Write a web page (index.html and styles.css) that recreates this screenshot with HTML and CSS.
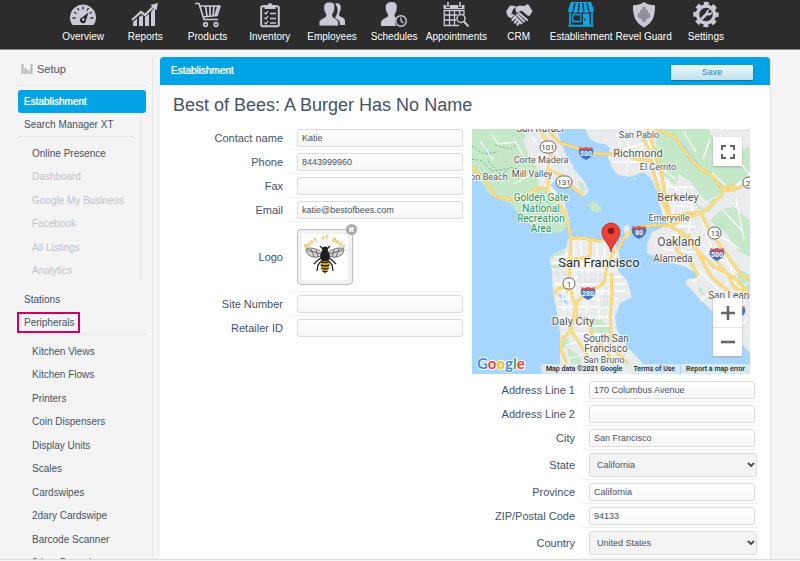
FILE: index.html
```html
<!DOCTYPE html>
<html lang="en">
<head>
<meta charset="utf-8">
<meta name="viewport" content="width=device-width, initial-scale=1">
<title>Establishment</title>
<link rel="stylesheet" href="styles.css">
</head>
<body>
<header class="topbar">
  <nav class="topnav" aria-label="Main">
    <a href="#"><svg viewBox="0 0 28 28"><path fill="currentColor" d="M3 24.5A13 13 0 1 1 25 24.5Q24.500 25 24 25H4Q3.500 25 3 24.500z"/><g stroke="#2b2b2b" stroke-width="1.300" fill="none"><path d="M3.500 18h3M5 12l2.500 1.500M8.500 8l1.500 2.500M14 6.500v3M19.500 8L18 10.500M24.500 18h-3M23 12l-2.500 1.500"/></g><path d="M19.500 12.500L17 20.500a3 3 0 1 1-4-3z" fill="#2b2b2b"/><circle cx="14.300" cy="19.500" r="1.200" fill="currentColor"/></svg>Overview</a>
    <a href="#"><svg viewBox="0 0 28 28"><path fill="currentColor" d="M2 22l4-3.500V26H2zM8 17l3-2 1 1v10H8zM14 17l4-3v12h-4zM20 12l4-5v19h-4z"/><path d="M1 20l9-8 4 3 9-9" fill="none" stroke="currentColor" stroke-width="2.200"/><path fill="currentColor" d="M27 3l-1.500 7.500L19.500 5z"/></svg>Reports</a>
    <a href="#"><svg viewBox="0 0 28 28"><g fill="none" stroke="currentColor" stroke-width="1.700" stroke-linejoin="round"><path d="M1 3.500h4l5 16h14M6 6h20l-3 9.500L9 17M11.500 6l1.500 10M16 6v10M20 6l-1 10M24 6l-3 10"/><circle cx="11.500" cy="24.500" r="1.800"/><circle cx="22" cy="24.500" r="1.800"/></g></svg>Products</a>
    <a href="#"><svg viewBox="0 0 28 28"><rect x="5.200" y="6.200" width="17.600" height="20" rx="1.500" fill="none" stroke="currentColor" stroke-width="2"/><path fill="currentColor" d="M8.500 9V5H12a2 2 0 1 1 4 0h3.500v4z"/><path d="M8.500 12.500l1.500 1.500 2-3M8.500 17.500l1.500 1.500 2-3M8.500 22.500l1.500 1.500 2-3M14 13.500h6M14 18.500h6M14 23h6" fill="none" stroke="currentColor" stroke-width="1.300"/></svg>Inventory</a>
    <a href="#"><svg viewBox="0 0 28 28"><path fill="currentColor" d="M17 3.500c5-1.500 6.500 2 5.500 6.500-.5 2-1.500 3-1.500 5 0 2 6 2 6 6v4h-5c0-4-1-5-5-6.500 0-2 2-3 2.500-7 .3-3-.5-6-2.500-8z"/><path fill="currentColor" d="M11.500 2c5 0 6 3.500 5 8-.5 2.500-2 3.500-2 5.500 0 3 6 2.500 6 8V26H1v-3c0-5 7-4.500 7-7.500 0-2-1.500-3-2-5.500-1-4.500.5-8 5.500-8z" stroke="#2c2c2c" stroke-width=".8"/></svg>Employees</a>
    <a href="#"><svg viewBox="0 0 28 28"><path fill="currentColor" d="M11.500 2c5 0 6 3.500 5 8-.5 2.500-2 3.500-2 5.500 0 1.500 1 2 2 2.500-2 2.500-2 5-.5 8H1v-3c0-5 7-4.500 7-7.500 0-2-1.500-3-2-5.500-1-4.500.5-8 5.500-8z"/><circle cx="21" cy="21" r="5.300" fill="none" stroke="currentColor" stroke-width="1.400"/><path d="M21 17.500V21l2.500 2" fill="none" stroke="currentColor" stroke-width="1.300"/></svg>Schedules</a>
    <a href="#"><svg viewBox="0 0 28 28"><path d="M1.500 5h21v4h-21z" fill="currentColor"/><path d="M6 2v6M18 2v6" stroke="#2b2b2b" stroke-width="3.400"/><path d="M6 2v5M18 2v5" stroke="currentColor" stroke-width="1.600"/><path d="M2.200 10v15.500H17M22 10v5M2 15h13M2 20h12M7.500 10v15M12.500 10v15M17.500 10v5M2 10.500h20" fill="none" stroke="currentColor" stroke-width="1.300"/><circle cx="19" cy="18.500" r="4" fill="#2b2b2b" stroke="currentColor" stroke-width="1.500"/><path d="M22 21.500l4.500 5" stroke="currentColor" stroke-width="2"/></svg>Appointments</a>
    <a href="#"><svg viewBox="0 0 28 28"><path fill="currentColor" d="M5 5.500L11 6l-3 3.500-1 3-2 5-2-1-2-5zM10 7.500l4-2 5 .5 4-2 4.500 7-3 5-2-.5-6-5-3 1.500c-2 1-3.500 0-2.500-1.500z"/><path d="M14 13l8 7M12 14.500l7 7M9.500 16l7 7.500" stroke="currentColor" stroke-width="2.100" stroke-linecap="round"/><path d="M6 17l1.500-2M7.500 20l2.500-3M10 22.500l2-3M12.500 24.500l1.500-2" stroke="currentColor" stroke-width="2.300" stroke-linecap="round"/></svg>CRM</a>
    <a href="#" class="is-active"><svg viewBox="0 0 28 28"><path fill="currentColor" d="M4 2h20l3 8c0 3-4.200 3.500-5 1-1 2.500-4.500 2.500-5.300 0-1 2.500-4.500 2.500-5.400 0-1 2.500-4.500 2.500-5.300 0C5 13.500 1 13 1 10z"/><path d="M8 3L6.200 11M12.200 3L11.300 11M15.800 3L16.700 11M20 3L21.800 11" stroke="#2b2b2b" stroke-width="1.400"/><path d="M3 13v12.500h22V13M1.500 26h25" fill="none" stroke="currentColor" stroke-width="1.700"/><path d="M5.800 14.500h8v7h-8z" fill="none" stroke="currentColor" stroke-width="1.300"/><path fill="currentColor" d="M16 13.500h6.500V25H16z"/><circle cx="17.800" cy="19.500" r=".9" fill="#2b2b2b"/></svg>Establishment</a>
    <a href="#"><svg viewBox="0 0 28 28"><path fill="currentColor" d="M14 2c3 2.500 7 3 11 3.300C25 15 24 22 14 27.500 4 22 3 15 3 5.300 7 5 11 4.500 14 2z"/><path d="M9 13v5M11 10v9M13 7v15M15 7v15M17 10v9M19 13v5" stroke="#6c6d73" stroke-width="1.200"/></svg>Revel Guard</a>
    <a href="#"><svg viewBox="0 0 28 28"><circle cx="14" cy="14.500" r="10.700" fill="none" stroke="currentColor" stroke-width="4" stroke-dasharray="4.800 3.600" stroke-dashoffset="2.400"/><circle cx="14" cy="14.500" r="8.500" fill="none" stroke="currentColor" stroke-width="3.500"/><path d="M10.300 18.300l5-5" stroke="currentColor" stroke-width="2.800" stroke-linecap="round"/><path d="M18.500 9.800l-2.200 1.200v2h2l1.700-1.800c.5 2.500-1 4.300-3.300 4.300-2.500-.3-3.500-3-2-4.800 1-1 2.200-1.500 3.800-.9z" fill="currentColor"/></svg>Settings</a>
  </nav>
</header>

<div class="workspace">
  <aside class="sidebar">
    <h2 class="setup"><svg viewBox="0 0 12 10"><path d="M1.500 0v10M4.500 4v6M7.500 6v4M10.500 0v10" stroke="#b5b5b5" stroke-width="2"/></svg>Setup</h2>
    <nav class="menu" aria-label="Setup">
      <a href="#" class="menu-item is-current">Establishment</a>
      <div class="scroll-group">
        <a href="#" class="menu-item">Search Manager XT</a>
        <ul class="submenu">
          <li><a href="#">Online Presence</a></li>
          <li class="muted"><a href="#">Dashboard</a></li>
          <li class="muted"><a href="#">Google My Business</a></li>
          <li class="muted"><a href="#">Facebook</a></li>
          <li class="muted"><a href="#">All Listings</a></li>
          <li class="muted"><a href="#">Analytics</a></li>
        </ul>
      </div>
      <a href="#" class="menu-item">Stations</a>
      <div class="menu-item"><a href="#" class="highlight">Peripherals</a></div>
      <ul class="submenu submenu-long">
        <li><a href="#">Kitchen Views</a></li>
        <li><a href="#">Kitchen Flows</a></li>
        <li><a href="#">Printers</a></li>
        <li><a href="#">Coin Dispensers</a></li>
        <li><a href="#">Display Units</a></li>
        <li><a href="#">Scales</a></li>
        <li><a href="#">Cardswipes</a></li>
        <li><a href="#">2dary Cardswipe</a></li>
        <li><a href="#">Barcode Scanner</a></li>
        <li><a href="#">2dary Barcode</a></li>
      </ul>
    </nav>
  </aside>

  <main class="panel">
    <div class="panel-head">
      <h1>Establishment</h1>
      <button type="submit" form="establishment" class="save">Save</button>
    </div>
    <form id="establishment" class="panel-body">
      <h2 class="title">Best of Bees: A Burger Has No Name</h2>
      <div class="columns">
        <div>
          <div class="row"><label for="contact">Contact name</label><div class="field"><input id="contact" type="text" value="Katie"></div></div>
          <div class="row"><label for="phone">Phone</label><div class="field"><input id="phone" type="text" value="8443999960"></div></div>
          <div class="row"><label for="fax">Fax</label><div class="field"><input id="fax" type="text"></div></div>
          <div class="row"><label for="email">Email</label><div class="field"><input id="email" type="text" value="katie@bestofbees.com"></div></div>
          <div class="row row-logo"><span class="row-label">Logo</span><div class="field">
            <div class="logo-box">
              <svg viewBox="0 0 46 46" role="img" aria-label="Best of Bees logo">
                <path id="arc" d="M4 15Q23 -4 42 15" fill="none"/>
                <text class="bee-text"><textPath href="#arc" startOffset="50%" text-anchor="middle">Best of Bees</textPath></text>
                <g fill="#d5d5d5" stroke="#444" stroke-width=".7"><path d="M21 19C15 14 7 13 4 15c0 4 3 7 7 8 4 1 8-1 10-2z"/><path d="M25 19c6-5 14-6 17-4 0 4-3 7-7 8-4 1-8-1-10-2z"/><path d="M5 16l14 4M9 15l3 8M14 16l2 7M41 16l-14 4M37 15l-3 8M32 16l-2 7"/></g>
                <path d="M21 15l-3-3M25 15l3-3M20 23l-5 4-3 3M20 26l-4 5-1 6M26 23l5 4 3 3M26 26l4 5 1 6" stroke="#222" stroke-width="1.300" fill="none"/>
                <path fill="#1d1d1d" d="M20.500 13.500q2.500-2 5 0l.5 4q2.500 2 1.500 7-1 3-4.500 3t-4.500-3q-1-5 1.500-7z"/>
                <path fill="#e9a620" d="M19 26q4 3 8 0 2 9-4 14-6-5-4-14z"/><path d="M19 27.500q4 2 8 0M18.800 31q4.200 2 8.400 0M19.200 34q3.800 2 7.600 0M20.500 37q2.500 1.500 5 0" stroke="#222" stroke-width="1.400" fill="none"/>
              </svg>
              <button type="button" class="remove" aria-label="Remove logo"><svg viewBox="0 0 11 11"><path d="M3.500 3.500l4 4M7.500 3.500l-4 4" stroke="#fff" stroke-width="1.800"/></svg></button>
            </div>
          </div></div>
          <div class="row"><label for="site">Site Number</label><div class="field"><input id="site" type="text"></div></div>
          <div class="row row-last"><label for="retailer">Retailer ID</label><div class="field"><input id="retailer" type="text"></div></div>
        </div>

        <div>
          <div class="map">
            <svg class="map-art" viewBox="0 0 278 245" role="img" aria-label="Map of San Francisco Bay">
              <rect width="278" height="245" fill="#a6d6fd"/>
              <!-- land -->
              <g fill="#e9ebed">
                <path d="M0 0H83l3 4 4 12 5 12 6 11 12 14 4 10-7 5-12-14-10-5-10 7 3 7 12 11 5 20-8 8-12 2-17-8-8-5-13-17-12-5-10-5L8 51 0 43z"/>
                <path d="M113 0l5 10 7 4 8 1 5 4-2 10 4 10 6 7 12 2 14-5 8 8 6 16 1 9 5 11 4 9-16 7-5 12v9l13 6 17 7 13 4 10 4-2 4-10 1-3 4 12 13 13 13 10 7 13 13 10 17 7 7V0z"/>
                <path d="M77 129l7-5 10-5 2-9 2-3 15 4h18l10 3 5 6 2 11-3 10 10 10 5 17-12 6-5 14 2 13 10 17 10 10 7 8 6 9H88V204l-3-20-4-20-1-23z"/>
                <path d="M151 99l5-4 3 9-4 6z"/>
              </g>
              <!-- parks and hills -->
              <g fill="#c5e8c9">
                <path d="M0 0h48l12 12 3 14 8 12-3 14 10 8 10 18 9 17-8 8-12 2-17-8-8-5-13-17-12-5-10-5L8 51 0 43z"/>
                <path d="M116 76l5-4 5 3 4 5-4 4-6-2zM160 46l4 4-2 1zM105 52l6 2 3 6-4 3z"/>
                <path d="M185 0h52l7 16 18 8 16-6v26l-28 22-14 18-12-6-12-14-18-16-14-16 4-10z"/>
                <path d="M238 92l12-12 12-2 16 14v36l-12-6-12-18zM262 138l16 8v24l-8-12zM115 190l14 0 10 11 3 10-10-2-12-8zM77 129l7-5 9-4-1 4-14 7zM79 136h14v3H80zM95 219l12 7 4 16-12-6zM226 158l5 2 1 6-5-3zM90 208l6 2 3 7-8 2z"/>
              </g>
              <g fill="#e9ebed"><path d="M62 0h22l8 24 10 14-7 6-13-4-7 12 9 10 4 10-6 1-8-12-8-4 2-8-4-12-7-10-6-16z"/><path d="M206 44l12 8 12 16 10 8-6 6-14-12-14-10z"/></g>
              <path fill="#a6d6fd" d="M210 13l8 12 8 8-2 3-9-8-7-12zM86 165l6 1 4 9-6-2zM200 134l14 4 9 6-8 2-14-7zM181 61l6 1-1 4-6-1zM235 184l4 2-5 5-3-5zM14 21l6 4-1 2-6-3z"/>
              <g fill="none" stroke="#63b27c" stroke-width="1" stroke-dasharray="2 2"><path d="M0 30l10 2 10 10 14-2M23 16l16 4 9-7M16 32l13 14M0 17l12 8 14-2M64 75l10-4 8 10M30 46l8-8 14 4"/></g>
              <!-- local streets -->
              <g fill="none" stroke="#fff" stroke-width="1.300">
                <path d="M60 8l14 18M58 31l22 6M56 45l20 8M84 22l10 18M70 10l4 30M72 56l12 8M20 5l6 10 18-2 8 16M8 12l14 20M42 55l18-10M48 65l12 14"/>
                <path d="M145 5l7 28M150 20l24-6M140 33h34M157 3l-2 40M175 2l12 52M166 20l16-4M180 34l24 16M180 44l28 18M187 58h34M188 66l34 10M190 76l36 2M190 84l30 2M197 50l-6 40M205 52l-5 42M213 58l-7 46M222 70l-8 48M196 96l28 2M200 105l30 6M187 112l40 5M190 120l46 5M228 86l12 34M234 98l34 22M226 112l40 32M222 122l54 42M216 131l46 44M252 125l22 50M236 120l-8 14M248 132l-8 16M262 142l-12 20M275 153l-12 22M238 10l-7 20M248 6l30 40M242 36l30-24M236 72l40-22M250 80l20 22M264 70l8 40M212 3l12 20M240 44l22 20M230 144l-10 10M238 164l-10 8M256 180l-12 6M268 184v25M275 190l-12 14"/>
                <path d="M82 128h62M80 134h60M80 141h66M81 148h70M82 155h72M83 162h70M84 170h62M85 178h58M87 188h54M88 197h52M90 205h54M102 112l2 75M109 112l3 65M117 114l-2 70M125 114l2 77M133 114l-4 66M140 118l-4 72M88 128l4 54M95 123l3 60M104 205l26 38M114 203l28 40M128 208l26 34M145 208l-20 8M152 219l-22 8M158 226l-20 10M94 216l18-4M96 230l20-6"/>
              </g>
              <!-- built-up blocks -->
              <g fill="#dfe1e4" opacity=".6"><path d="M106 145h26v9h-26zM83 140h12v10H83zM128 166h14v12h-14zM190 108h18v8h-18zM240 184l22 22 2 10-14-18z"/></g>
              <!-- highways -->
              <g fill="none" stroke="#f2c95c" stroke-width="2.900" stroke-linejoin="round">
                <path id="h1" d="M67 0l6 9 8 9-5 20 0 24 9 10 8 11 4 16 2 10h12l10 2 10 1M77 41l14 6 9 11 11 8M76 60l-12-1-8 6-14 6-18-3L14 52 0 38"/>
                <path id="h2" d="M78 4l10 10 14 4 14 6 22 1 11-1 15 6 16 2M168 3l10 20 2 15 7 24 6 15 5 20 12 7 12 14 20 20 20 10 21 24M175 0l8 22 6 18 3 20 5 22 1 15M183 0l20 8 8 12 14 17 14 9 13 15 9 0 17-7M187 89l24-4 20-2 18-16 4-8 10-3M200 96l28-12 14 24 8 11 20 28 8 3M210 101l-6 20 14 10 8 16M216 105l18 34 8 12 16 12M238 124l18 22 6 12 16 7M145 121l8-14 8-6 12-4 12-1 13 1"/>
                <path id="h3" d="M99 109l-1 17-1 22-2 15M82 165l4-5 12-3 2 10 4 10-3 13-2 12-10 9v10l6 14-3 10M142 121l-8 20-2 13-14 9-13 9-1 14-6 14 8 12 8 12 10 20M107 187l10 8 4 14 14 12 8 22M139 144l1 23-2 18 1 15-1 17 15 14 10 14M118 112v16l-18 2"/>
              </g>
              <g fill="none" stroke="#fde08a" stroke-width="1.700" stroke-linejoin="round">
                <use href="#h1" stroke-width="1.700"/><use href="#h2"/><use href="#h3"/>
                <path d="M67 0l6 9 8 9-5 20 0 24 9 10 8 11 4 16 2 10h12l10 2 10 1"/>
              </g>
              <!-- route shields -->
              <g class="route">
                <rect x="68" y="12" width="16" height="12" rx="6"/><text x="76" y="21">101</text>
                <rect x="84" y="47" width="16" height="12" rx="6"/><text x="92" y="56">131</text>
                <rect x="236" y="98" width="13" height="12" rx="6"/><text x="243" y="107">13</text>
                <rect x="271" y="48" width="15" height="11" rx="5"/><text x="276" y="57">2</text>
                <rect x="91" y="149" width="12" height="11" rx="5"/><text x="97" y="158">1</text>
              </g>
              <g class="interstate">
                <g id="sh"><path d="M107 20q7 2 14 0 2 7-7 11-9-4-7-11z" fill="#4272c4"/><path d="M107.500 18l3 1 3.500-1 3.500 1 3-1v3h-13z" fill="#dd5148"/></g>
                <use href="#sh" x="53" y="79"/><use href="#sh" x="2" y="140"/><use href="#sh" x="131" y="101"/><use href="#sh" x="152" y="159"/>
                <text x="114" y="27">580</text><text x="167" y="106">80</text><text x="116" y="167">280</text><text x="245" y="128">580</text>
              </g>
              <!-- place names -->
              <g class="place">
                <text x="68" y="3" class="s10">San Rafael</text><text x="69" y="34">Corte Madera</text><text x="60" y="48">Mill Valley</text><text x="17" y="51">on Beach</text>
                <text x="167" y="9">San Pablo</text><text x="166" y="28" class="s11">Richmond</text><text x="186" y="41">El Cerrito</text><text x="206" y="72" class="s11">Berkeley</text><text x="197" y="92">Emeryville</text>
                <text x="207" y="117" class="s12">Oakland</text><text x="201" y="133" class="s10">Alameda</text><text x="264" y="170" class="s10">San Leandro</text>
                <text x="101" y="196" class="s11">Daly City</text><text x="134" y="213" class="s10">South San</text><text x="134" y="223" class="s10">Francisco</text><text x="132" y="234">San Bruno</text>
              </g>
              <g class="place park"><text x="69" y="72">Golden Gate</text><text x="69" y="83">National</text><text x="69" y="93">Recreation</text><text x="69" y="103">Area</text></g>
              <path d="M139 123c-1-8-9-12-9-20a9 9 0 0 1 18 0c0 8-8 12-9 20z" fill="#ea4335" stroke="#c5221f" stroke-width=".8"/><circle cx="139" cy="102" r="3.200" fill="#8c1914"/>
              <g class="place"><text x="127" y="138" class="city">San Francisco</text></g>
              <text x="5" y="240" class="brand"><tspan fill="#4285f4">G</tspan><tspan fill="#ea4335">o</tspan><tspan fill="#fbbc05">o</tspan><tspan fill="#4285f4">g</tspan><tspan fill="#34a853">l</tspan><tspan fill="#ea4335">e</tspan></text>
            </svg>
            <button type="button" class="map-btn fullscreen" aria-label="Toggle fullscreen"><svg viewBox="0 0 14 14"><path d="M1 5V1h4M9 1h4v4M13 9v4H9M5 13H1V9" fill="none" stroke="#666" stroke-width="2"/></svg></button>
            <div class="zoom">
              <button type="button" class="map-btn" aria-label="Zoom in"><svg viewBox="0 0 14 14"><path d="M7 0v14M0 7h14" stroke="#666" stroke-width="2.600"/></svg></button>
              <button type="button" class="map-btn" aria-label="Zoom out"><svg viewBox="0 0 14 14"><path d="M0 7h14" stroke="#666" stroke-width="2.600"/></svg></button>
            </div>
            <div class="credits"><span>Map data ©2021 Google</span><a href="#">Terms of Use</a><a href="#">Report a map error</a></div>
          </div>
          <div class="address">
            <div class="row"><label for="addr1">Address Line 1</label><div class="field"><input id="addr1" type="text" value="170 Columbus Avenue"></div></div>
            <div class="row"><label for="addr2">Address Line 2</label><div class="field"><input id="addr2" type="text"></div></div>
            <div class="row"><label for="city">City</label><div class="field"><input id="city" type="text" value="San Francisco"></div></div>
            <div class="row row-select"><label for="state">State</label><div class="field"><select id="state"><option>California</option></select><svg class="chevron" viewBox="0 0 8 6"><path d="M1 1l3 3 3-3" fill="none" stroke="#3f4a5a" stroke-width="1.800"/></svg></div></div>
            <div class="row"><label for="province">Province</label><div class="field"><input id="province" type="text" value="California"></div></div>
            <div class="row"><label for="zip">ZIP/Postal Code</label><div class="field"><input id="zip" type="text" value="94133"></div></div>
            <div class="row row-select"><label for="country">Country</label><div class="field"><select id="country"><option>United States</option></select><svg class="chevron" viewBox="0 0 8 6"><path d="M1 1l3 3 3-3" fill="none" stroke="#3f4a5a" stroke-width="1.800"/></svg></div></div>
          </div>
        </div>
      </div>
    </form>
  </main>
</div>
</body>
</html>
```
FILE: styles.css
```css
* { box-sizing: border-box; }

body {
  margin: 0;
  height: 100vh;
  display: flex;
  flex-direction: column;
  overflow: hidden;
  background: #f4f4f4;
  color: #465265;
  font: 10px/12px "Liberation Sans", Arial, sans-serif;
}

a { color: inherit; text-decoration: none; }
h1, h2, ul { margin: 0; padding: 0; font-weight: normal; }
li { list-style: none; }
svg { display: block; }

/* Top navigation */
.topbar {
  flex: none;
  height: 50px;
  padding-left: 52px;
  background: #2c2c2c;
  border-bottom: 1px solid #8a8a8a;
}
.topnav {
  display: grid;
  grid-template-columns: repeat(11, 1fr);
  max-width: 685px;
}
.topnav a {
  display: flex;
  flex-direction: column;
  align-items: center;
  gap: 2px;
  color: #fff;
  line-height: 13px;
  white-space: nowrap;
}
.topnav svg { width: 28px; height: 28px; color: #c9cad6; }
.topnav .is-active svg { color: #0ea5e9; }

.workspace {
  flex: 1;
  min-height: 0;
  display: flex;
  margin-bottom: 1px;
  padding-right: 30px;
  border-bottom: 1px solid #dcdce0;
  overflow: hidden;
}

/* Sidebar */
.sidebar {
  flex: none;
  width: 153px;
  margin: 7px 7px 0 0;
  padding: 0 6px 0 18px;
  border-right: 1px solid #e8e8e8;
}
.setup {
  display: flex;
  align-items: center;
  gap: 4px;
  height: 29px;
  margin-bottom: 4px;
  padding: 0 0 4px 3px;
  border-bottom: 1px solid #e6e6e6;
  font-size: 11px;
}
.setup svg { width: 12px; height: 10px; }
.menu-item {
  display: flex;
  align-items: center;
  height: 23px;
  padding: 0 6px;
  border-radius: 3px;
}
.is-current { background: #00a3e4; color: #fff; text-shadow: 0 0 1px #fff; }
.scroll-group {
  margin: 0 5px 5px 0;
  border-right: 1px solid #e9e9e9;
}
.highlight {
  margin-left: -7px;
  padding: 2px 3px 2px 5px;
  border: 2px solid #cc0066;
  line-height: 13px;
}
.submenu {
  display: grid;
  grid-auto-rows: 1fr;
  align-items: center;
  height: 147px;
  padding: 5px 0 0 14px;
  border-top: 1px solid #e6e6e6;
}
.scroll-group .submenu { margin-right: 6px; }
.submenu-long { height: 241px; }
.muted { color: #bfc2cd; }

/* Content panel */
.panel {
  flex: 1;
  min-width: 0;
  margin-top: 7px;
  border-radius: 4px 4px 0 0;
  background: #fff;
  box-shadow: 1px 0 1px #e2e2e2;
}
.panel-head {
  display: flex;
  align-items: center;
  justify-content: space-between;
  height: 28px;
  padding: 0 17px 0 11px;
  border-radius: 4px 4px 0 0;
  background: #00a3e4;
}
.panel-head h1 { color: #fff; font-size: 10px; text-shadow: 0 0 1px #fff; }
.save {
  width: 82px;
  height: 15px;
  margin-top: 2px;
  padding: 0;
  border: 0;
  border-radius: 1px;
  background: linear-gradient(#eef7fa, #c0e1ec);
  box-shadow: 0 1px 2px #0077a8;
  color: #158fc4;
  font: 9px/12px "Liberation Sans", Arial, sans-serif;
}
.panel-body { padding: 0 13px; }
.title { font-size: 18px; line-height: 41px; }
.columns {
  display: grid;
  grid-template-columns: 292fr 285fr;
  gap: 7px;
}

/* Form rows */
.row {
  display: grid;
  grid-template-columns: 1fr 175px;
  gap: 7px;
  height: 24px;
  align-items: stretch;
}
.row label, .row-label {
  align-self: center;
  text-align: right;
  font-size: 11px;
}
.field {
  position: relative;
  display: flex;
  align-items: center;
  padding: 0 2px 0 7px;
  border-bottom: 1px solid #f1f1f1;
}
.row-last .field { border-color: transparent; }
.row-logo { height: 70px; }
.row-select { height: 30px; }
.row-select .field { padding-right: 0; }
input, select {
  width: 100%;
  height: 18px;
  margin: 0;
  padding: 0 4px;
  border: 1px solid #dcdcdc;
  border-radius: 3px;
  background: linear-gradient(#fff, #f7f7f7);
  color: #465265;
  font: 9px/12px "Liberation Sans", Arial, sans-serif;
}
select {
  appearance: none;
  height: 24px;
  padding: 0 7px;
  background: #f4f4f4;
}
.chevron { position: absolute; right: 2px; top: 12px; width: 8px; height: 6px; }

.logo-box {
  position: relative;
  width: 56px;
  height: 56px;
  padding: 4px;
  border: 1px solid #bdbdbd;
  border-radius: 4px;
  background: #f1f1f1;
}
.logo-box > svg { background: #fff; }
.bee-text { font: bold 6px "Liberation Mono", monospace; fill: #e6b43a; }
.remove {
  position: absolute;
  top: -6px;
  right: -5px;
  width: 11px;
  height: 11px;
  padding: 0;
  border: 0;
  border-radius: 50%;
  background: #a9a9a9;
}

/* Map */
.map {
  position: relative;
  margin: 3px 7px 0 0;
  overflow: hidden;
  font-family: Roboto, sans-serif;
}
.map-art { width: 100%; }
.map text { font-family: Roboto, sans-serif; text-anchor: middle; }
.place text {
  font-size: 9px;
  fill: #50555b;
  stroke: #fff;
  stroke-width: 2px;
  stroke-opacity: .75;
  stroke-linejoin: round;
  paint-order: stroke;
}
.place .s10 { font-size: 10px; }
.place .s11 { font-size: 11px; }
.place .s12 { font-size: 12px; }
.place .city { font-size: 13px; fill: #222529; }
.park text { font-size: 10px; fill: #26915a; }
.route rect { fill: #fff; stroke: #666; }
.route text { font-size: 8px; fill: #444; }
.interstate text { font-size: 7px; font-weight: bold; fill: #fff; }
.map .brand {
  font: bold 15px Lato, sans-serif;
  text-anchor: start;
  stroke: #fff;
  stroke-width: 2px;
  paint-order: stroke;
}
.map-btn {
  display: grid;
  place-items: center;
  width: 29px;
  height: 29px;
  padding: 0;
  border: 0;
  background: #fff;
}
.map-btn svg { width: 14px; height: 14px; }
.fullscreen { position: absolute; top: 8px; right: 8px; box-shadow: 0 1px 2px #aaa; }
.zoom { position: absolute; right: 8px; bottom: 18px; box-shadow: 0 1px 2px #aaa; }
.zoom .map-btn + .map-btn { border-top: 1px solid #e6e6e6; }
.credits {
  position: absolute;
  right: 0;
  bottom: 0;
  display: flex;
  gap: 1px;
  color: #222;
  font-size: 7px;
  font-weight: 500;
  line-height: 10px;
  white-space: nowrap;
}
.credits > * { padding: 0 5px; background: #e4eef5cc; }
.address { margin-top: 4px; }
```
